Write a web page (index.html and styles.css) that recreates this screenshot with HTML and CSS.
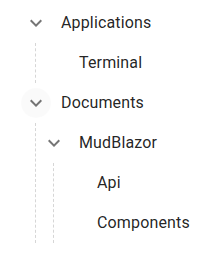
FILE: index.html
```html
<!DOCTYPE html>
<html>
  <head>
    <title>Tree View</title>
    <link rel="stylesheet" href="styles.css">
  </head>
  <body>
    <div class="tree">
      <div class="tree-row">
        <span class="arrow"><svg viewBox="0 0 24 24"><path d="M7.41 8.59 12 13.17l4.59-4.58L18 10l-6 6-6-6 1.41-1.41z"/></svg></span>
        <span class="label">Applications</span>
      </div>
      <div class="tree-group">
        <div class="tree-row">
          <span class="arrow"></span>
          <span class="label">Terminal</span>
        </div>
      </div>

      <div class="tree-row">
        <span class="arrow hovered"><svg viewBox="0 0 24 24"><path d="M7.41 8.59 12 13.17l4.59-4.58L18 10l-6 6-6-6 1.41-1.41z"/></svg></span>
        <span class="label">Documents</span>
      </div>
      <div class="tree-group">
        <div class="tree-row">
          <span class="arrow"><svg viewBox="0 0 24 24"><path d="M7.41 8.59 12 13.17l4.59-4.58L18 10l-6 6-6-6 1.41-1.41z"/></svg></span>
          <span class="label">MudBlazor</span>
        </div>
        <div class="tree-group">
          <div class="tree-row">
            <span class="arrow"></span>
            <span class="label">Api</span>
          </div>
          <div class="tree-row">
            <span class="arrow"></span>
            <span class="label">Components</span>
          </div>
        </div>
      </div>
    </div>
  </body>
</html>
```
FILE: styles.css
```css
body {
  margin: 0;
  background-color: #ffffff;
  font-family: Roboto, "Liberation Sans", sans-serif;
  font-size: 16px;
  color: rgba(0, 0, 0, 0.87);
}

.tree {
  padding-top: 3px;
  padding-left: 18px;
}

.tree-row {
  display: flex;
  align-items: center;
  height: 40px;
  padding-left: 3px;
}

.arrow {
  display: flex;
  align-items: center;
  justify-content: center;
  width: 30px;
  height: 30px;
  border-radius: 50%;
  margin-right: 10px;
  flex-shrink: 0;
}

.arrow svg {
  width: 24px;
  height: 24px;
  fill: rgba(0, 0, 0, 0.54);
}

.arrow.hovered {
  background-color: rgba(0, 0, 0, 0.02);
}

.label {
  line-height: 24px;
  letter-spacing: 0.00938em;
}

.tree-group {
  margin-left: 17px;
  border-left: 1px dashed #d6d6d6;
}
```
